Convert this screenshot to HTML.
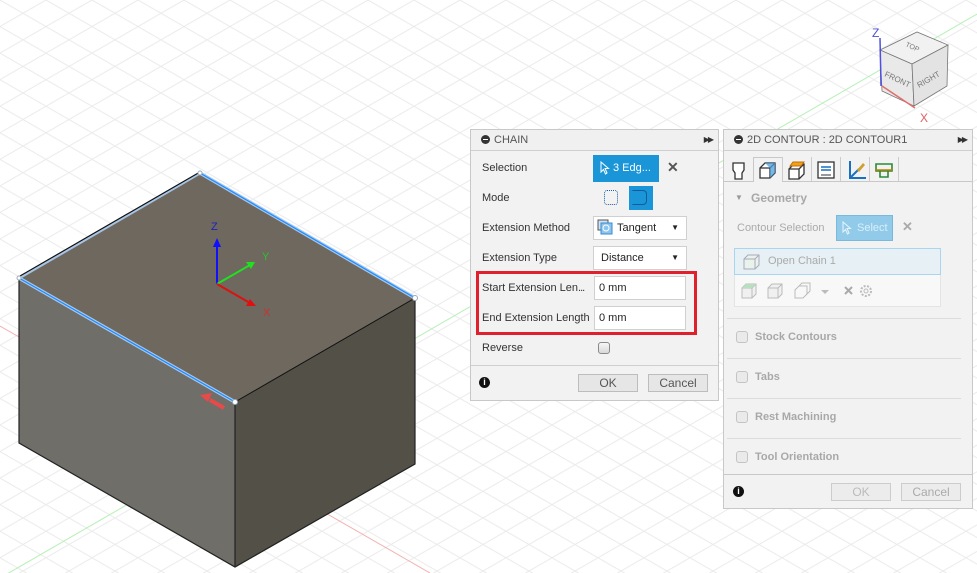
<!DOCTYPE html>
<html><head><meta charset="utf-8"><style>
*{box-sizing:border-box;margin:0;padding:0}
body{width:977px;height:573px;overflow:hidden;background:#fff;font-family:"Liberation Sans",Arial,sans-serif;font-size:11px;color:#333;position:relative}
.abs{position:absolute}
.panel{position:absolute;background:#f2f2f2;border:1px solid #c8c8c8}
.hdr{height:21px;border-bottom:1px solid #cfcfcf;background:#f0f0f0;color:#555;font-size:11px;line-height:20px;padding-left:10px}
.hdr .dot{display:inline-block;width:9px;height:9px;border-radius:50%;background:#333;vertical-align:-1px;margin-right:4px;position:relative}
.hdr .dot:after{content:"";position:absolute;left:2px;top:4px;width:5px;height:1px;background:#fff}
.ff{position:absolute;right:6px;top:0;font-size:8px;color:#333;letter-spacing:-2px}
.lbl{position:absolute;font-size:11px;color:#333}
.inp{position:absolute;background:#fff;border:1px solid #d0d0d0;font-size:11px;line-height:20px;padding-left:4px;color:#222}
.btn{position:absolute;border:1px solid #bdbdbd;background:#e6e6e6;text-align:center;font-size:12px;color:#555;line-height:16px}
.cb{position:absolute;width:12px;height:12px;border:1px solid #8a8a8a;border-radius:3px;background:linear-gradient(#f6f6f6,#d8d8d8)}
.gcb{position:absolute;width:12px;height:12px;border:1px solid #c4c4c4;border-radius:3px;background:#eaeaea}
.glbl{position:absolute;font-size:11px;color:#a8a8a8;font-weight:bold}
.sep{position:absolute;height:1px;background:#dcdcdc}
</style></head><body>
<svg class="abs" style="left:0;top:0" width="977" height="573">
<defs>
<pattern id="g" width="46" height="26.56" patternUnits="userSpaceOnUse">
<path d="M0 0 L46 26.56 M-46 0 L46 53.12 M0 26.56 L46 0 M0 53.12 L92 0 M0 0 L-46 26.56" stroke="#ebebeb" stroke-width="1" fill="none"/>
</pattern>
</defs>
<rect width="977" height="573" fill="url(#g)"/>
<line x1="0" y1="326" x2="430" y2="573" stroke="#f4b0b0" stroke-width="1"/>
<line x1="0" y1="578" x2="977" y2="14" stroke="#b4f0b4" stroke-width="1"/>
<polygon points="19,278 235,402 235,567 19,443" fill="#6f6e68"/>
<polygon points="235,402 415,298 415,464 235,567" fill="#535048"/>
<polygon points="200,173 415,298 235,402 19,278" fill="#6e685f"/>
<polyline points="19,278 19,443 235,567 415,464 415,298" fill="none" stroke="#222" stroke-width="1.2"/>
<line x1="235" y1="402" x2="235" y2="567" stroke="#222" stroke-width="1.2"/>
<line x1="235" y1="402" x2="415" y2="298" stroke="#111" stroke-width="1"/>
<line x1="19" y1="278" x2="200" y2="173" stroke="#a8c4e4" stroke-width="3"/>
<line x1="20" y1="276" x2="200" y2="172" stroke="#111" stroke-width="1.2"/>
<polyline points="19,278 235,402" fill="none" stroke="#a8c8ee" stroke-width="3.5"/>
<polyline points="19,278 235,402" fill="none" stroke="#1a8cff" stroke-width="1.2"/>
<polyline points="200,173 415,298" fill="none" stroke="#a8c8ee" stroke-width="3.5"/>
<polyline points="200,173 415,298" fill="none" stroke="#1a8cff" stroke-width="1.2"/>
<circle cx="415" cy="298" r="2.5" fill="#fff" stroke="#9ab"/>
<circle cx="235" cy="402" r="2.5" fill="#fff" stroke="#9ab"/>
<circle cx="19" cy="278" r="2" fill="#fff" stroke="#9ab"/>
<circle cx="200" cy="173" r="2" fill="#fff" stroke="#9ab"/>
<line x1="224" y1="408" x2="210" y2="400" stroke="#e84a4a" stroke-width="4"/>
<polygon points="200,395 212,393 208,402" fill="#e84a4a"/>
<line x1="217" y1="284" x2="217" y2="245" stroke="#1010ff" stroke-width="2"/>
<polygon points="213,247 221,247 217,238" fill="#1010ff"/>
<line x1="217" y1="284" x2="250" y2="265" stroke="#20e020" stroke-width="2"/>
<polygon points="246,262 255,262 251,269" fill="#20e020"/>
<line x1="217" y1="284" x2="250" y2="303" stroke="#e01010" stroke-width="2"/>
<polygon points="246,306 256,306 250,299" fill="#e01010"/>
<text x="211" y="230" font-size="11" fill="#2020c0" font-family="Liberation Sans">Z</text>
<text x="262" y="260" font-size="11" fill="#30c030" font-family="Liberation Sans">Y</text>
<text x="263" y="316" font-size="11" fill="#d03030" font-family="Liberation Sans">X</text>
<polygon points="880,50 917,32 948,45 912,64" fill="#f1f1f1" stroke="#777" stroke-width="0.8"/>
<polygon points="880,50 912,64 914,106 882,91" fill="#e9e9e9" stroke="#777" stroke-width="0.8"/>
<polygon points="912,64 948,45 947,86 914,106" fill="#e3e3e3" stroke="#777" stroke-width="0.8"/>
<line x1="880" y1="38" x2="881" y2="86" stroke="#5050e0" stroke-width="1.5"/>
<line x1="882" y1="86" x2="915" y2="108" stroke="#e07070" stroke-width="1.5"/>
<text x="872" y="37" font-size="12" fill="#5050d0" font-family="Liberation Sans">Z</text>
<text x="920" y="122" font-size="12" fill="#e06060" font-family="Liberation Sans">X</text>
<text x="884" y="76" font-size="8" fill="#777" font-family="Liberation Sans" transform="rotate(25 884 76)">FRONT</text>
<text x="919" y="88" font-size="8" fill="#777" font-family="Liberation Sans" transform="rotate(-30 919 88)">RIGHT</text>
<text x="905" y="46" font-size="7" fill="#777" font-family="Liberation Sans" transform="rotate(25 905 46)">TOP</text>
</svg>

<div class="panel" style="left:470px;top:129px;width:249px;height:272px">
 <div class="hdr"><span class="dot"></span>CHAIN<span class="ff">▶▶</span></div>
 <div class="lbl" style="left:11px;top:32px">Selection</div>
 <div class="abs" style="left:122px;top:25px;width:66px;height:27px;background:#1a96d8;color:#fff;font-size:11px;line-height:27px;padding-left:20px">3 Edg...</div>
 <svg class="abs" style="left:129px;top:31px" width="10" height="14"><path d="M1 1 L1 11 L3.5 8.5 L5.5 13 L7 12 L5 7.5 L8.5 7.5 Z" fill="#1a96d8" stroke="#fff" stroke-width="1"/></svg>
 <div class="abs" style="left:196px;top:29px;font-size:14px;color:#555;font-weight:bold">✕</div>
 <div class="lbl" style="left:11px;top:62px">Mode</div>
 <div class="abs" style="left:133px;top:60px;width:14px;height:15px;border:1px dotted #1a5aa8;border-radius:3px"></div>
 <div class="abs" style="left:158px;top:56px;width:24px;height:24px;background:#1a96d8"><div style="position:absolute;left:3px;top:4px;width:15px;height:15px;border:1px solid #145a9a;border-left-color:transparent;border-radius:0 4px 4px 0"></div></div>
 <div class="lbl" style="left:11px;top:92px">Extension Method</div>
 <div class="inp" style="left:122px;top:86px;width:94px;height:24px;line-height:22px;padding-left:23px">Tangent<span style="position:absolute;right:7px;font-size:8px">▼</span></div>
 <svg class="abs" style="left:126px;top:89px" width="16" height="16"><rect x="1" y="1" width="10" height="10" fill="#cfe3f5" stroke="#555"/><rect x="4" y="4" width="11" height="11" fill="#8cc4ee" stroke="#3a8ad0"/><circle cx="9" cy="9" r="3" fill="none" stroke="#fff"/></svg>
 <div class="lbl" style="left:11px;top:122px">Extension Type</div>
 <div class="inp" style="left:122px;top:116px;width:94px;height:24px;line-height:22px;padding-left:7px">Distance<span style="position:absolute;right:7px;font-size:8px">▼</span></div>
 <div class="abs" style="left:5px;top:141px;width:221px;height:64px;border:3px solid #e0202c"></div>
 <div class="lbl" style="left:11px;top:152px">Start Extension Len<span style="letter-spacing:-1px">...</span></div>
 <div class="inp" style="left:123px;top:146px;width:92px;height:24px;line-height:22px">0 mm</div>
 <div class="lbl" style="left:11px;top:182px">End Extension Length</div>
 <div class="inp" style="left:123px;top:176px;width:92px;height:24px;line-height:22px">0 mm</div>
 <div class="lbl" style="left:11px;top:212px">Reverse</div>
 <div class="cb" style="left:127px;top:212px"></div>
 <div class="abs" style="left:0;top:235px;width:247px;height:1px;background:#cfcfcf"></div>
 <div class="abs" style="left:8px;top:247px;width:11px;height:11px;border-radius:50%;background:#111;color:#fff;font-size:9px;font-weight:bold;text-align:center;line-height:11px">i</div>
 <div class="btn" style="left:107px;top:244px;width:60px;height:18px">OK</div>
 <div class="btn" style="left:177px;top:244px;width:60px;height:18px">Cancel</div>
</div>

<div class="panel" style="left:723px;top:129px;width:250px;height:380px">
 <div class="hdr"><span class="dot"></span>2D CONTOUR : 2D CONTOUR1<span class="ff">▶▶</span></div>
 <div class="abs" style="left:0;top:51px;width:248px;height:1px;background:#c8c8c8"></div>
 <div class="abs" style="left:29px;top:27px;width:30px;height:25px;background:#f2f2f2;border:1px solid #c8c8c8;border-bottom:none"></div>
 <div class="abs" style="left:58px;top:27px;width:1px;height:24px;background:#ccc"></div>
 <div class="abs" style="left:87px;top:27px;width:1px;height:24px;background:#ccc"></div>
 <div class="abs" style="left:116px;top:27px;width:1px;height:24px;background:#ccc"></div>
 <div class="abs" style="left:145px;top:27px;width:1px;height:24px;background:#ccc"></div>
 <div class="abs" style="left:174px;top:27px;width:1px;height:24px;background:#ccc"></div>
 <svg class="abs" style="left:0;top:28px" width="180" height="24">
  <path d="M9 5 h11 v7 l-2 3 v6 h-7 v-6 l-2 -3z" fill="#fff" stroke="#333" stroke-width="1.3"/>
  <path d="M36 10 l5 -5 h10 v10 l-5 5 h-10z M36 10 h10 v10 M46 10 l5 -5" fill="#fff" stroke="#333" stroke-width="1.3"/>
  <path d="M41 5 h10 v10 l-5 5 v-10z" fill="#4aa0e0" opacity=".75"/>
  <path d="M65 11 l5 -5 h10 v10 l-5 5 h-10z M65 11 h10 v10 M75 11 l5 -5" fill="#fff" stroke="#333" stroke-width="1.3"/>
  <path d="M66 8 l3 -4 h11 l-3 4z" fill="#f0a020" stroke="#c07000"/>
  <rect x="94" y="4" width="16" height="16" fill="#fff" stroke="#333" stroke-width="1.3"/><path d="M97 9 h10 M97 12 h10" stroke="#1a70c0" stroke-width="1.6"/><path d="M97 17 h10" stroke="#333"/>
  <path d="M126 3 v17 h16 M126 20 l9 -9" stroke="#1a70c0" stroke-width="2" fill="none"/><path d="M133 12 l6 -7 l2 2 l-6 7z" fill="#d0a030"/>
  <path d="M152 6 h16 v7 h-16z M156 13 v6 h8 v-6" fill="none" stroke="#2a8a3a" stroke-width="1.6"/><path d="M151 12 h18" stroke="#c08000" stroke-width="1.5"/>
 </svg>
 <div class="abs" style="left:11px;top:63px;font-size:8px;color:#999">▼</div>
 <div class="glbl" style="left:27px;top:61px;font-size:12px">Geometry</div>
 <div class="abs" style="left:13px;top:92px;color:#aaa;font-size:11px">Contour Selection</div>
 <div class="abs" style="left:112px;top:85px;width:57px;height:26px;background:#92cbea;border:1px solid #7ab8dc;color:#d8eefa;line-height:24px;padding-left:20px;font-size:11px">Select</div>
 <svg class="abs" style="left:118px;top:91px" width="10" height="14"><path d="M1 1 L1 11 L3.5 8.5 L5.5 13 L7 12 L5 7.5 L8.5 7.5 Z" fill="#92cbea" stroke="#e8f4fb" stroke-width="1"/></svg>
 <div class="abs" style="left:178px;top:89px;font-size:13px;color:#aaa;font-weight:bold">✕</div>
 <div class="abs" style="left:10px;top:118px;width:207px;height:27px;background:#e6f0f5;border:1px solid #a8d6ee"></div>
 <svg class="abs" style="left:19px;top:124px" width="18" height="16"><path d="M1 5 l4 -4 h11 v10 l-4 4 h-11z M1 5 h11 v10 M12 5 l4 -4" fill="#eaf2ec" stroke="#aab"/></svg>
 <div class="abs" style="left:44px;top:125px;color:#aaa;font-size:11px">Open Chain 1</div>
 <div class="abs" style="left:10px;top:145px;width:207px;height:32px;background:#f8f8f8;border:1px solid #e4e4e4;border-top:none"></div>
 <svg class="abs" style="left:14px;top:152px" width="160" height="18">
  <path d="M4 6 l4 -4 h10 v10 l-4 4 h-10z M4 6 h10 v10 M14 6 l4 -4" fill="#f0f0f0" stroke="#bbb"/><path d="M4 6 l4 -4 h10 l-4 4z" fill="#b8e0c0"/>
  <path d="M30 6 l4 -4 h10 v10 l-4 4 h-10z M30 6 h10 v10 M40 6 l4 -4" fill="#f0f0f0" stroke="#bbb"/>
  <path d="M57 8 l4 -4 h8 v8 l-4 4 h-8z M61 4 l3 -3 h8 v8 l-3 3" fill="none" stroke="#bbb"/>
  <path d="M83 8 h8 l-4 4z" fill="#bbb"/>
  <path d="M107 5 l7 7 M114 5 l-7 7" stroke="#aaa" stroke-width="2"/>
  <circle cx="128" cy="9" r="5" fill="none" stroke="#bbb" stroke-width="2" stroke-dasharray="2 1.5"/><circle cx="128" cy="9" r="2" fill="none" stroke="#bbb"/>
 </svg>
 <div class="sep" style="left:3px;top:188px;width:234px"></div>
 <div class="gcb" style="left:12px;top:201px"></div><div class="glbl" style="left:31px;top:201px">Stock Contours</div>
 <div class="sep" style="left:3px;top:228px;width:234px"></div>
 <div class="gcb" style="left:12px;top:241px"></div><div class="glbl" style="left:31px;top:241px">Tabs</div>
 <div class="sep" style="left:3px;top:268px;width:234px"></div>
 <div class="gcb" style="left:12px;top:281px"></div><div class="glbl" style="left:31px;top:281px">Rest Machining</div>
 <div class="sep" style="left:3px;top:308px;width:234px"></div>
 <div class="gcb" style="left:12px;top:321px"></div><div class="glbl" style="left:31px;top:321px">Tool Orientation</div>
 <div class="abs" style="left:0;top:344px;width:248px;height:1px;background:#c8c8c8"></div>
 <div class="abs" style="left:9px;top:356px;width:11px;height:11px;border-radius:50%;background:#111;color:#fff;font-size:9px;font-weight:bold;text-align:center;line-height:11px">i</div>
 <div class="btn" style="left:107px;top:353px;width:60px;height:18px;color:#bbb;background:#ececec;border-color:#ccc">OK</div>
 <div class="btn" style="left:177px;top:353px;width:60px;height:18px;color:#aaa;background:#ececec;border-color:#ccc">Cancel</div>
</div>
</body></html>
